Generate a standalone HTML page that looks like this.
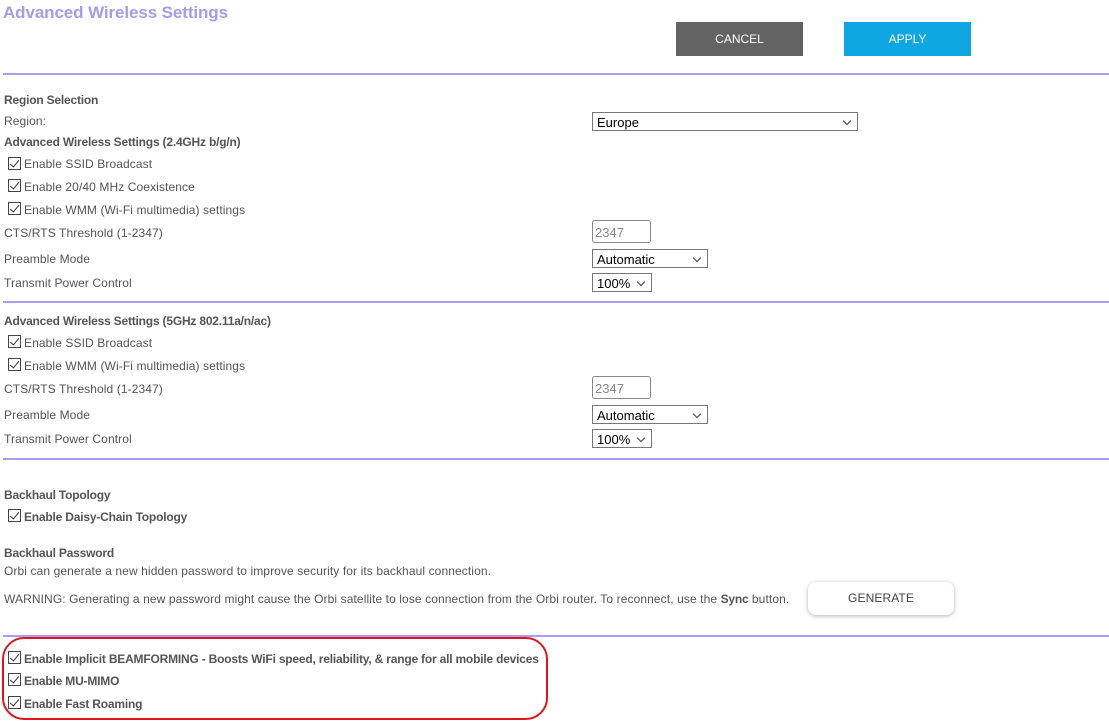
<!DOCTYPE html><html><head><style>
body{margin:0;width:1109px;height:728px;background:#fff;font-family:"Liberation Sans",Arial,sans-serif;font-size:12px;color:#555;position:relative;overflow:hidden}
.a{position:absolute;white-space:nowrap;letter-spacing:0.1px}
.b{font-weight:bold;letter-spacing:-0.2px}
.hr{position:absolute;left:3px;right:0;height:2px;background:#a89ef0}
.cb{position:absolute;width:11px;height:11px;border:1px solid #444;background:#fff}
.cb:after{content:"";position:absolute;left:3px;top:0px;width:4px;height:8px;border:solid #333;border-width:0 1.5px 1.5px 0;transform:rotate(40deg)}
.sel{position:absolute;border:1px solid #777;background:#fff;color:#000;font-size:13px;height:19px;line-height:19px;padding-left:4px;box-sizing:border-box}
.sel:after{content:"";position:absolute;right:7px;top:5px;width:5px;height:5px;border:solid #444;border-width:0 1px 1px 0;transform:rotate(45deg)}
.inp{position:absolute;border:1px solid #888;border-radius:3px;color:#888;font-size:13px;height:23px;line-height:23px;padding-left:2px;box-sizing:border-box;width:59px}
.btn{position:absolute;color:#fff;font-size:12px;text-align:center;line-height:34px;height:34px;width:127px}
</style></head><body>
<div class="a" style="left:3px;top:3px;font-size:17px;font-weight:bold;color:#a59bf4;letter-spacing:-0.1px">Advanced Wireless Settings</div>
<div class="btn" style="left:676px;top:22px;background:#636363">CANCEL</div>
<div class="btn" style="left:844px;top:22px;background:#0ea7e4">APPLY</div>
<div class="hr" style="top:73px"></div>
<div class="a b" style="left:4px;top:93px">Region Selection</div>
<div class="a" style="left:4px;top:114px">Region:</div>
<div class="sel" style="left:592px;top:112px;width:266px">Europe</div>
<div class="a b" style="left:4px;top:135px">Advanced Wireless Settings (2.4GHz b/g/n)</div>
<div class="cb" style="left:8px;top:157px"></div><div class="a" style="left:24px;top:157px">Enable SSID Broadcast</div>
<div class="cb" style="left:8px;top:179px"></div><div class="a" style="left:24px;top:180px">Enable 20/40 MHz Coexistence</div>
<div class="cb" style="left:8px;top:202px"></div><div class="a" style="left:24px;top:203px">Enable WMM (Wi-Fi multimedia) settings</div>
<div class="a" style="left:4px;top:226px">CTS/RTS Threshold (1-2347)</div>
<div class="inp" style="left:592px;top:220px">2347</div>
<div class="a" style="left:4px;top:252px">Preamble Mode</div>
<div class="sel" style="left:592px;top:249px;width:116px">Automatic</div>
<div class="a" style="left:4px;top:276px">Transmit Power Control</div>
<div class="sel" style="left:592px;top:273px;width:60px">100%</div>
<div class="hr" style="top:301px"></div>
<div class="a b" style="left:4px;top:314px">Advanced Wireless Settings (5GHz 802.11a/n/ac)</div>
<div class="cb" style="left:8px;top:335px"></div><div class="a" style="left:24px;top:336px">Enable SSID Broadcast</div>
<div class="cb" style="left:8px;top:358px"></div><div class="a" style="left:24px;top:359px">Enable WMM (Wi-Fi multimedia) settings</div>
<div class="a" style="left:4px;top:382px">CTS/RTS Threshold (1-2347)</div>
<div class="inp" style="left:592px;top:376px">2347</div>
<div class="a" style="left:4px;top:408px">Preamble Mode</div>
<div class="sel" style="left:592px;top:405px;width:116px">Automatic</div>
<div class="a" style="left:4px;top:432px">Transmit Power Control</div>
<div class="sel" style="left:592px;top:429px;width:60px">100%</div>
<div class="hr" style="top:458px"></div>
<div class="a b" style="left:4px;top:488px">Backhaul Topology</div>
<div class="cb" style="left:8px;top:509px"></div><div class="a b" style="left:24px;top:510px">Enable Daisy-Chain Topology</div>
<div class="a b" style="left:4px;top:546px">Backhaul Password</div>
<div class="a" style="left:4px;top:564px">Orbi can generate a new hidden password to improve security for its backhaul connection.</div>
<div class="a" style="left:4px;top:592px">WARNING: Generating a new password might cause the Orbi satellite to lose connection from the Orbi router. To reconnect, use the <b style="letter-spacing:-0.2px">Sync</b> button.</div>
<div class="a" style="left:808px;top:582px;width:146px;height:33px;line-height:33px;text-align:center;border-radius:8px;box-shadow:0 1px 4px rgba(0,0,0,.3);background:#fff;color:#444">GENERATE</div>
<div class="hr" style="top:635px"></div>
<div class="a" style="left:2px;top:637px;width:546px;height:83px;border:2.5px solid #e3141c;border-radius:22px;box-sizing:border-box"></div>
<div class="cb" style="left:8px;top:651px"></div><div class="a b" style="left:24px;top:652px">Enable Implicit BEAMFORMING - Boosts WiFi speed, reliability, &amp; range for all mobile devices</div>
<div class="cb" style="left:8px;top:673px"></div><div class="a b" style="left:24px;top:674px">Enable MU-MIMO</div>
<div class="cb" style="left:8px;top:696px"></div><div class="a b" style="left:24px;top:697px">Enable Fast Roaming</div>
</body></html>
